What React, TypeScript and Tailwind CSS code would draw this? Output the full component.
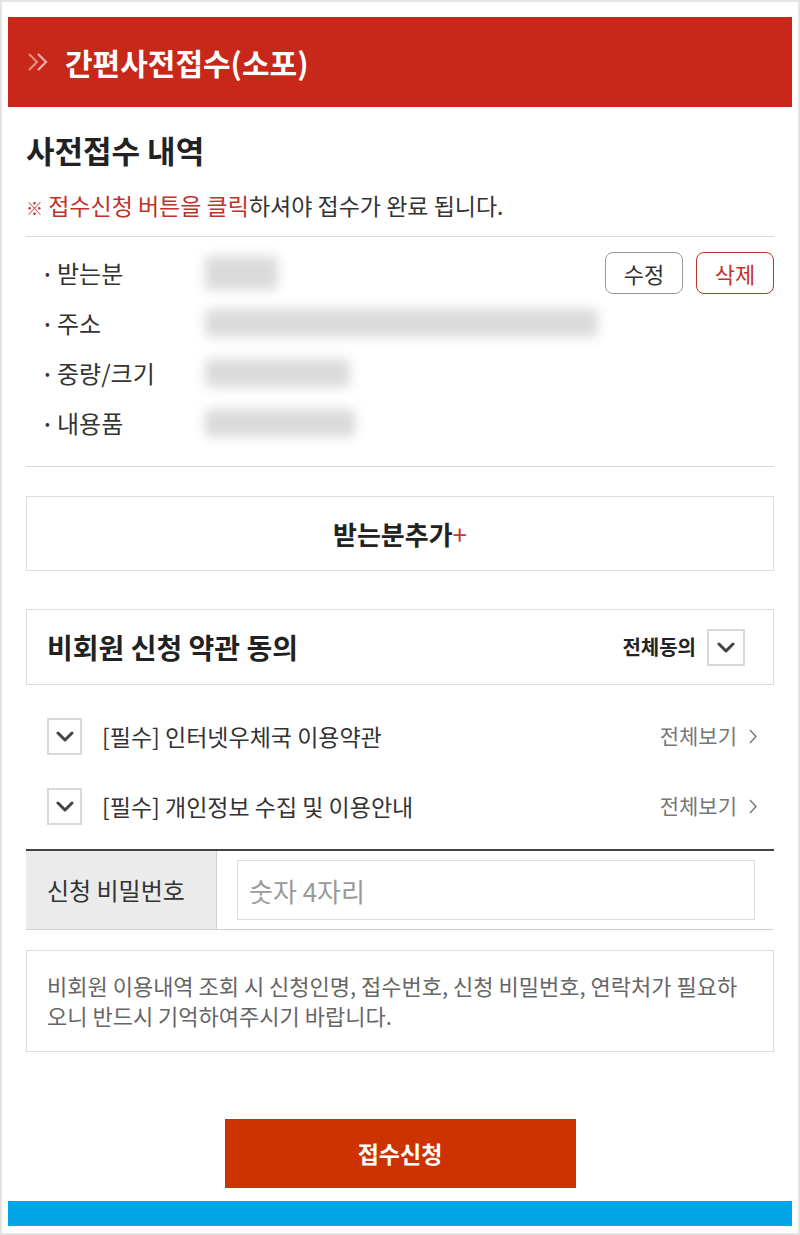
import React from 'react'

const font = { fontFamily: '"Noto Sans CJK KR", "Noto Sans", sans-serif' }

function CheckBox({ className = '' }: { className?: string }) {
	return (
		<span className={`flex items-center justify-center border-2 border-[#d9d9d9] bg-white ${className}`}>
			<svg width="18" height="11" viewBox="0 0 18 11" fill="none">
				<polyline points="2,2 9,9 16,2" stroke="#444" strokeWidth="3" strokeLinecap="round" strokeLinejoin="round" />
			</svg>
		</span>
	)
}

function TermRow({ title, first }: { title: string; first?: boolean }) {
	return (
		<div className={`flex h-[70px] items-center justify-between pl-[21px] pr-[17px] ${first ? 'mt-[16px]' : ''}`}>
			<div className="flex items-center">
				<CheckBox className="h-[37px] w-[35px]" />
				<span className="ml-[20px] text-[23px] text-[#333]">{title}</span>
			</div>
			<div className="flex items-center text-[21px] text-[#777]">
				전체보기
				<svg className="ml-[12px]" width="8" height="15" viewBox="0 0 8 15" fill="none">
					<polyline points="1,1 7,7.5 1,14" stroke="#777" strokeWidth="1.4" />
				</svg>
			</div>
		</div>
	)
}

export default function App() {
	const rows = [
		{ label: '받는분', blur: 'w-[73px] h-[34px]' },
		{ label: '주소', blur: 'w-[393px] h-[28px]' },
		{ label: '중량/크기', blur: 'w-[145px] h-[28px]' },
		{ label: '내용품', blur: 'w-[150px] h-[28px]' },
	]

	return (
		<div className="h-[1235px] w-[800px] border-2 border-[#e4e4e4] bg-white px-[6px] pt-[15px]" style={font}>
			{/* header */}
			<div className="flex h-[90px] items-center bg-[#c8281a] pl-[19px]">
				<svg width="22" height="22" viewBox="0 0 22 22" fill="none">
					<polyline points="2,3 10,11 2,19" stroke="#ee8a7d" strokeWidth="2.2" />
					<polyline points="11,3 19,11 11,19" stroke="#f6b2a8" strokeWidth="2.2" />
				</svg>
				<h1 className="ml-[16px] text-[30px] font-bold text-white">간편사전접수(소포)</h1>
			</div>

			<div className="px-[18px]">
				<h2 className="mt-[23px] text-[31px] leading-[40px] font-bold text-[#222]">사전접수 내역</h2>
				<p className="mt-[21px] h-[28px] text-[23px] leading-[28px] text-[#333]">
					<span className="text-[#c0322a]">
						<span className="text-[17px] leading-none">※</span> 접수신청 버튼을 클릭
					</span>
					하셔야 접수가 완료 됩니다.
				</p>

				<div className="mt-[17px] border-y border-[#d9d9d9] pt-[11px] pb-[18px]">
					{rows.map((row, i) => (
						<div key={row.label} className="flex h-[50px] items-center pl-[19px]">
							<span className="w-[12px] text-[14px] text-[#333]">•</span>
							<span className="w-[148px] text-[24px] text-[#333]">{row.label}</span>
							<span className={`rounded-sm bg-[#dadada] blur-[6px] ${row.blur}`} />
							{i === 0 && (
								<div className="ml-auto flex gap-[13px]">
									<button className="h-[42px] w-[78px] rounded-[8px] border border-[#9a9a9a] text-[22px] text-[#333]">
										수정
									</button>
									<button className="h-[42px] w-[78px] rounded-[8px] border border-[#c0322a] text-[22px] text-[#c0322a]">
										삭제
									</button>
								</div>
							)}
						</div>
					))}
				</div>

				<div className="mt-[29px] flex h-[75px] items-center justify-center border border-[#dcdcdc] text-[26px] font-bold text-[#222]">
					받는분추가<span className="font-normal text-[#d0342a]">+</span>
				</div>

				<div className="mt-[38px] flex h-[76px] items-center justify-between border border-[#dcdcdc] pr-[28px] pl-[20px]">
					<span className="text-[28px] font-bold text-[#222]">비회원 신청 약관 동의</span>
					<div className="flex items-center">
						<span className="text-[20px] font-bold text-[#222]">전체동의</span>
						<CheckBox className="ml-[11px] h-[37px] w-[38px]" />
					</div>
				</div>

				<TermRow title="[필수] 인터넷우체국 이용약관" first />
				<TermRow title="[필수] 개인정보 수집 및 이용안내" />

				<div className="mt-[8px] flex h-[81px] border-t-2 border-b border-t-[#444] border-b-[#cfcfcf]">
					<div className="flex w-[191px] items-center border-r border-[#cfcfcf] bg-[#ebebeb] pl-[21px] text-[24px] text-[#333]">
						신청 비밀번호
					</div>
					<div className="flex flex-1 items-center pr-[19px] pl-[20px]">
						<input
							className="h-[60px] w-full border border-[#dcdcdc] px-[11px] text-[26px] outline-none placeholder:text-[#9a9a9a]"
							placeholder="숫자 4자리"
						/>
					</div>
				</div>

				<div className="mt-[20px] h-[102px] border border-[#dcdcdc] px-[20px] pt-[19px] text-[22px] leading-[30px] text-[#666]">
					<span className="whitespace-nowrap">비회원 이용내역 조회 시 신청인명, 접수번호, 신청 비밀번호, 연락처가 필요하</span>
					<br />
					오니 반드시 기억하여주시기 바랍니다.
				</div>

				<button className="mx-auto mt-[67px] flex h-[69px] w-[351px] items-center justify-center bg-[#cc3300] text-[23px] font-bold text-white">
					접수신청
				</button>
			</div>

			<div className="mt-[13px] h-[25px] bg-[#00a5e6]" />
		</div>
	)
}
